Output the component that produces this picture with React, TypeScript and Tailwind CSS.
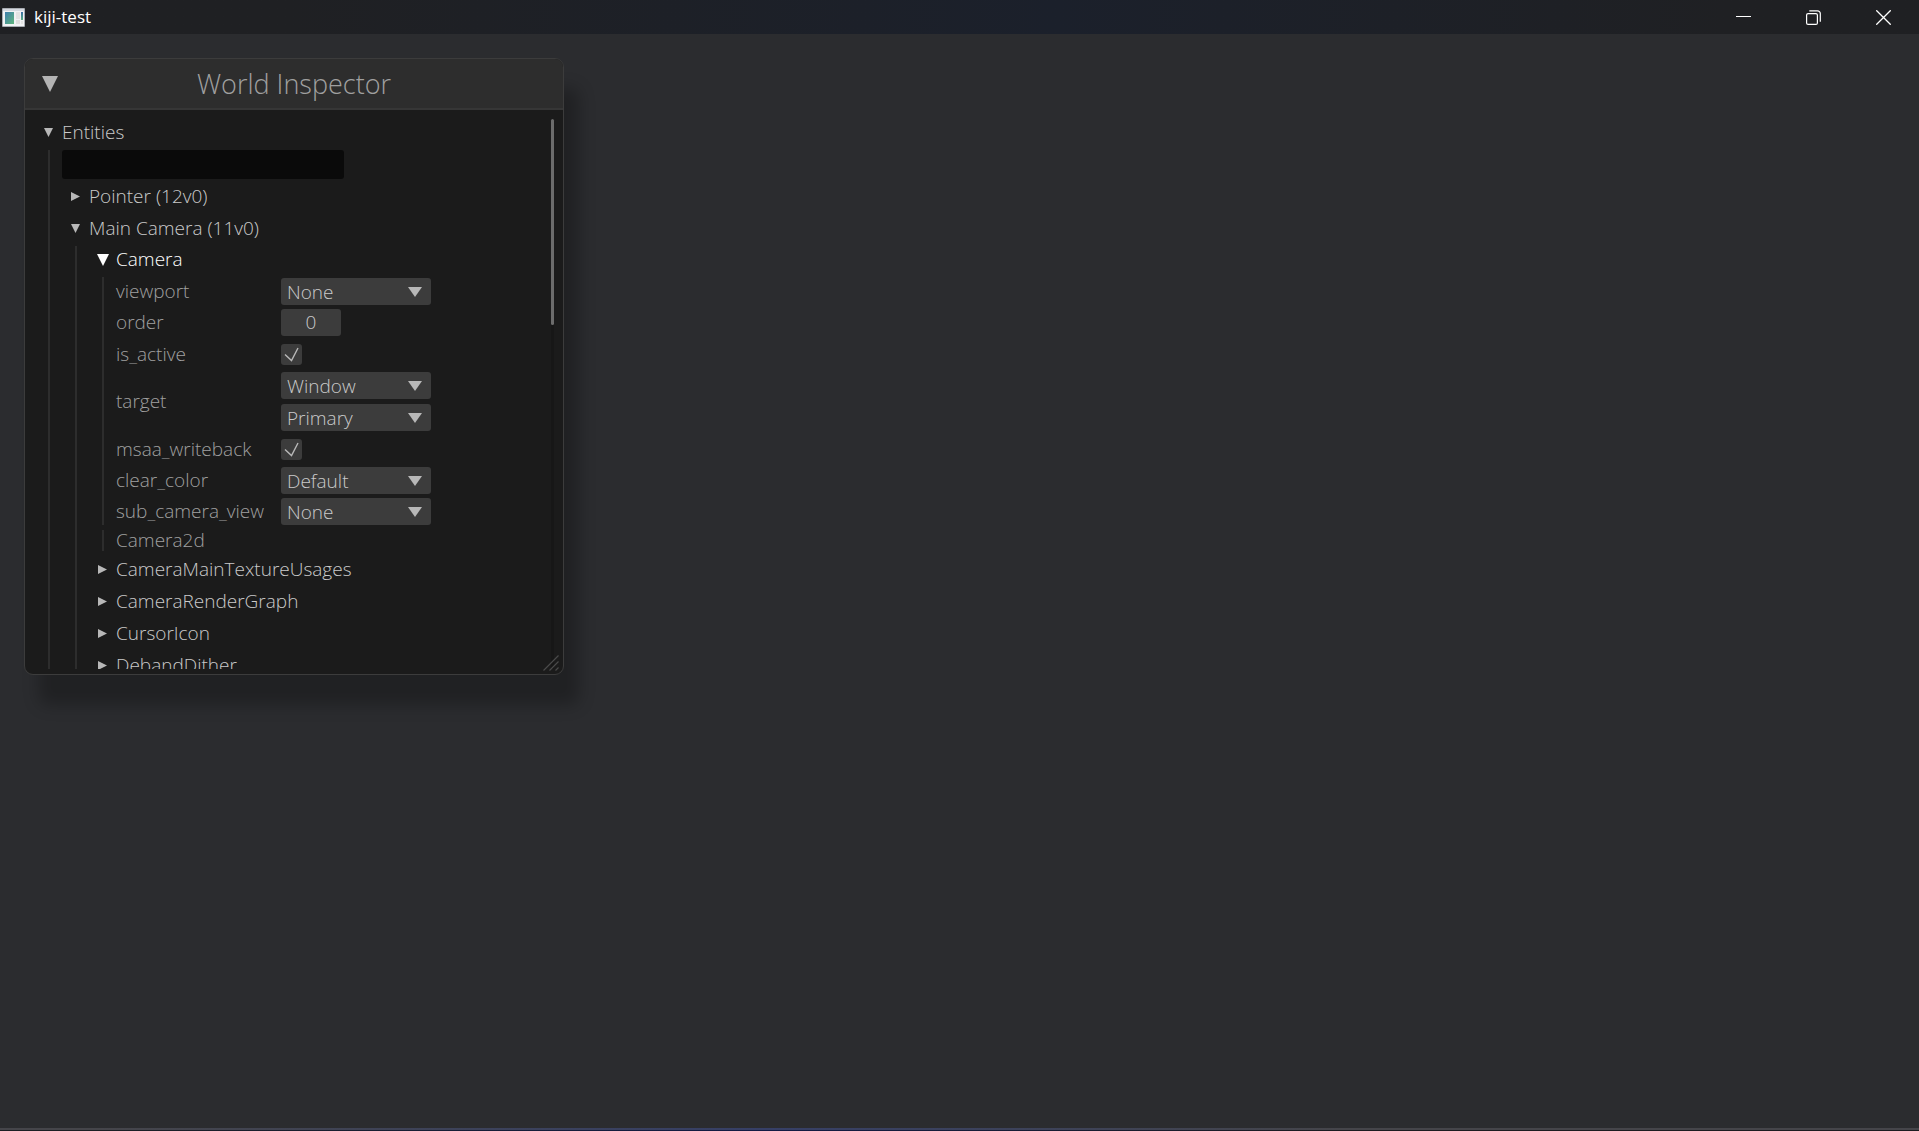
import React, { useState } from 'react';

interface TriangleProps {
  open: boolean;
  className?: string;
}

const Triangle: React.FC<TriangleProps> = ({ open, className }) => (
  <svg viewBox="0 0 10 10" className={className} fill="currentColor" aria-hidden="true">
    <path d={open ? 'M0 0H10L5 10Z' : 'M0 0L10 5L0 10Z'} />
  </svg>
);

interface NodeProps {
  label: string;
  defaultOpen?: boolean;
  active?: boolean;
  children?: React.ReactNode;
}

// Collapsible row, its children hang off a vertical guide line
const Node: React.FC<NodeProps> = ({ label, defaultOpen = false, active = false, children }) => {
  const [open, setOpen] = useState(defaultOpen);
  return (
    <div>
      <button
        type="button"
        aria-expanded={open}
        onClick={() => setOpen(!open)}
        className={`flex h-[27px] items-center whitespace-nowrap ${active ? 'text-white' : 'text-[#cacaca]'}`}
      >
        <span className="flex w-[27px] justify-center">
          <Triangle open={open} className={active ? 'h-3 w-3' : 'h-[9px] w-[9px] text-[#b8b8b8]'} />
        </span>
        {label}
      </button>
      {open && children && <Guide className="mt-1">{children}</Guide>}
    </div>
  );
};

const Guide: React.FC<{ className?: string; children: React.ReactNode }> = ({ className = '', children }) => (
  <div className={`ml-[13px] flex flex-col gap-[5px] border-l-2 border-[#2d2d2d] pl-3 ${className}`}>{children}</div>
);

interface DropdownProps {
  id: string;
  label?: string;
  options: string[];
}

const Dropdown: React.FC<DropdownProps> = ({ id, label, options }) => (
  <div className="relative w-[150px]">
    <select
      id={id}
      aria-label={label}
      className="block h-[27px] w-full appearance-none rounded-[3px] bg-[#3c3c3c] pl-[6px] text-[#cacaca] outline-none"
    >
      {options.map((o) => (
        <option key={o}>{o}</option>
      ))}
    </select>
    <svg
      viewBox="0 0 14 10"
      className="pointer-events-none absolute top-[9px] right-[9px] h-[10px] w-[14px] fill-[#b8b8b8]"
      aria-hidden="true"
    >
      <path d="M0 0H14L7 10Z" />
    </svg>
  </div>
);

const Checkbox: React.FC<{ id: string }> = ({ id }) => (
  <span className="relative block h-[21px] w-[21px]">
    <input
      id={id}
      type="checkbox"
      defaultChecked
      className="peer block h-[21px] w-[21px] appearance-none rounded-[3px] bg-[#3c3c3c]"
    />
    <svg
      viewBox="0 0 21 21"
      className="pointer-events-none absolute inset-0 hidden fill-none stroke-[#b8b8b8] peer-checked:block"
      strokeWidth="1.4"
      aria-hidden="true"
    >
      <path d="M4 10.5L10.5 16.5L17 4" />
    </svg>
  </span>
);

interface FieldProps {
  id: string;
  name: string;
  rowClass: string;
  children: React.ReactNode;
}

const Field: React.FC<FieldProps> = ({ id, name, rowClass, children }) => (
  <div className={`flex items-center ${rowClass}`}>
    <label htmlFor={id} className="w-[165px] whitespace-nowrap">
      {name}
    </label>
    {children}
  </div>
);

const selectRow = 'h-[31px] pb-1';
const checkRow = 'h-8 pb-[3px]';

const CameraFields = () => (
  <div className="flex flex-col pt-px text-[#a0a0a0]">
    <Field id="viewport" name="viewport" rowClass={selectRow}>
      <Dropdown id="viewport" options={['None', 'Some']} />
    </Field>
    <Field id="order" name="order" rowClass={selectRow}>
      <input
        id="order"
        type="text"
        defaultValue="0"
        className="h-[27px] w-[60px] rounded-[3px] bg-[#3c3c3c] text-center text-[#cacaca] outline-none"
      />
    </Field>
    <Field id="is_active" name="is_active" rowClass={checkRow}>
      <Checkbox id="is_active" />
    </Field>
    <Field id="target" name="target" rowClass="h-[63px] pb-1">
      <div className="flex flex-col gap-[5px]">
        <Dropdown id="target" options={['Window', 'Image', 'TextureView']} />
        <Dropdown id="target_window" label="target window" options={['Primary', 'Entity']} />
      </div>
    </Field>
    <Field id="msaa_writeback" name="msaa_writeback" rowClass={checkRow}>
      <Checkbox id="msaa_writeback" />
    </Field>
    <Field id="clear_color" name="clear_color" rowClass={selectRow}>
      <Dropdown id="clear_color" options={['Default', 'Custom', 'None']} />
    </Field>
    <Field id="sub_camera_view" name="sub_camera_view" rowClass="h-[27px]">
      <Dropdown id="sub_camera_view" options={['None', 'Some']} />
    </Field>
  </div>
);

const TitleBar = () => (
  <header className="flex h-[34px] items-center bg-linear-to-r from-[#1f2023] from-15% via-[#1b202b] via-55% to-[#1f2023] to-90% pr-px">
    <svg viewBox="0 0 23 19" className="ml-[2px] h-[19px] w-[23px]" aria-hidden="true">
      <defs>
        <linearGradient id="pane" x1="0" y1="0" x2="1" y2="1">
          <stop offset="0" stopColor="#3f7fae" />
          <stop offset="1" stopColor="#5fb57c" />
        </linearGradient>
        <linearGradient id="strip" x1="0" y1="0" x2="0" y2="1">
          <stop offset="0" stopColor="#3a6ea5" />
          <stop offset="1" stopColor="#58ad80" />
        </linearGradient>
      </defs>
      <rect width="23" height="19" rx="1" fill="#a9adb3" />
      <rect x="1" y="1" width="21" height="17" fill="#f1f2f4" />
      <rect x="1" y="1" width="21" height="2" fill="#d5d9e0" />
      <rect x="3" y="4" width="9" height="12" fill="url(#pane)" />
      <rect x="14" y="4" width="4" height="7" fill="#e3e3e3" />
      <rect x="14" y="12" width="4" height="4" fill="#dedede" />
      <rect x="19" y="4" width="2" height="8" fill="url(#strip)" />
      <rect x="19" y="13" width="2" height="3" fill="#e3e3e3" />
    </svg>
    <h1 className="ml-[9px] flex-1 font-['Open_Sans',sans-serif] text-[17px] text-white">kiji-test</h1>
    <button type="button" aria-label="Minimize" className="flex h-full w-[70px] items-center justify-center">
      <svg viewBox="0 0 15 15" className="h-[15px] w-[15px] fill-none stroke-white" strokeWidth="1">
        <path d="M0 6.5H15" />
      </svg>
    </button>
    <button type="button" aria-label="Restore" className="flex h-full w-[70px] items-center justify-center">
      <svg viewBox="0 0 15 15" className="h-[15px] w-[15px] fill-none stroke-white" strokeWidth="1.2">
        <rect x="0.6" y="3.6" width="10.8" height="10.8" rx="1.5" />
        <path d="M3.3 0.8H11.5A2.8 2.8 0 0 1 14.3 3.6V11.8" />
      </svg>
    </button>
    <button type="button" aria-label="Close" className="flex h-full w-[70px] items-center justify-center">
      <svg viewBox="0 0 15 15" className="h-[15px] w-[15px] fill-none stroke-white" strokeWidth="1.3">
        <path d="M0.3 0.3L14.7 14.7M14.7 0.3L0.3 14.7" />
      </svg>
    </button>
  </header>
);

const Inspector = () => (
  <section className="relative flex h-[617px] w-[540px] flex-col overflow-hidden rounded-[9px] border border-[#3c3c3c] bg-[#1b1b1b] font-['Open_Sans',sans-serif] text-[19px] font-light shadow-[15px_30px_16px_rgba(0,0,0,0.25)]">
    <div className="grid h-[51px] shrink-0 grid-cols-[1fr_auto_1fr] items-center border-b-2 border-[#363636] bg-[#2d2d2d]">
      <button type="button" aria-label="Collapse" className="justify-self-start pl-[17px] text-[#b4b4b4]">
        <Triangle open className="h-4 w-4" />
      </button>
      <h2 className="text-[27px] leading-8 text-[#a0a0a0]">World Inspector</h2>
    </div>
    <div className="flex min-h-0 flex-1 pt-[9px] pr-[9px] pb-[5px] pl-[10px]">
      <div className="flex-1 overflow-hidden">
        <Node label="Entities" defaultOpen>
          <div className="flex flex-col gap-1">
            <input
              type="text"
              aria-label="Filter entities"
              className="block h-[29px] w-[282px] rounded-[3px] bg-[#0a0a0a] px-[6px] text-[#cacaca] outline-none"
            />
            <Node label="Pointer (12v0)" />
          </div>
          <Node label="Main Camera (11v0)" defaultOpen>
            <Node label="Camera" defaultOpen active>
              <CameraFields />
            </Node>
            <Guide>
              <span className="h-[21px] leading-[21px] text-[#a0a0a0]">Camera2d</span>
            </Guide>
            <Node label="CameraMainTextureUsages" />
            <Node label="CameraRenderGraph" />
            <Node label="CursorIcon" />
            <Node label="DebandDither" />
          </Node>
        </Node>
      </div>
      <div className="w-[3px] bg-[#171717]">
        <div className="h-[206px] rounded-full bg-[#6c6c6c]" />
      </div>
    </div>
    <svg
      viewBox="0 0 16 16"
      className="absolute right-1 bottom-[3px] h-4 w-4 fill-none stroke-[#4a4a4a]"
      strokeWidth="1.2"
      aria-hidden="true"
    >
      <path d="M0.5 15.5L15.5 0.5M6.5 15.5L15.5 6.5M12.5 15.5L15.5 12.5" />
    </svg>
  </section>
);

export default function App() {
  return (
    <div className="flex min-h-screen flex-col bg-[#2b2c2f]">
      <TitleBar />
      <main className="flex-1 p-6">
        <Inspector />
      </main>
      <div className="h-[2px] bg-linear-to-r from-[#45454a] from-5% via-[#363f66] via-40% to-[#45454a] to-70%" />
      <div className="h-px bg-linear-to-r from-[#1c1f24] from-5% via-[#131b45] via-40% to-[#1c1c20] to-70%" />
    </div>
  );
}
